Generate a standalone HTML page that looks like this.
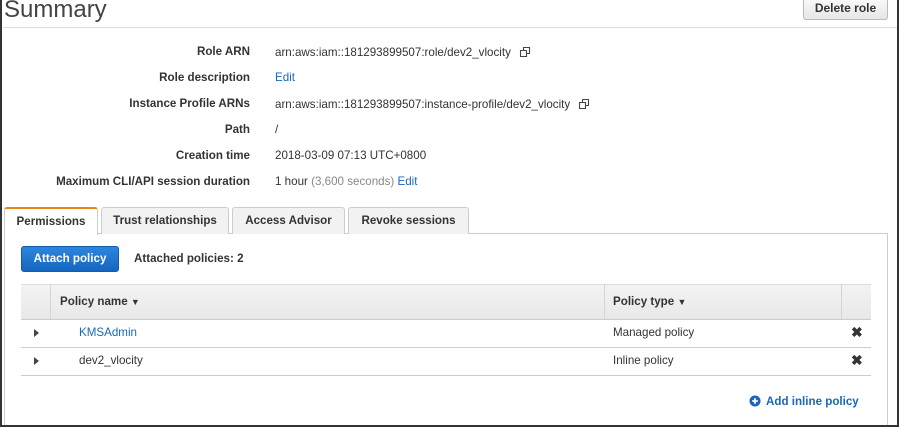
<!DOCTYPE html>
<html><head><style>
*{box-sizing:border-box;margin:0;padding:0}
body{width:899px;height:427px;overflow:hidden;background:#fff;font-family:"Liberation Sans",Arial,sans-serif;font-size:11.6px;color:#333;position:relative}
.frame{position:absolute;left:0;top:0;width:899px;height:427px;border:2px solid #333;border-top:0;z-index:5}
.abs{position:absolute;white-space:nowrap}
.title{left:4px;top:-4px;font-size:24px;color:#444}
.hr{left:3px;top:27px;width:894px;height:1px;background:#ddd}
.del{left:803px;top:-2px;width:85px;height:22px;border:1px solid #bbb;border-top:0;border-radius:0 0 3px 3px;background:linear-gradient(#fafafa,#e6e6e6);font-weight:bold;text-align:center;line-height:20px;color:#333;font-size:12px}
.lbl{right:649px;font-weight:bold;text-align:right}
.val{left:275px}
.blue{color:#1a66b8}
.gray{color:#888}
.tab{top:207px;height:27px;border:1px solid #ccc;border-bottom:0;background:#f2f2f2;font-weight:bold;text-align:center;line-height:25px;border-radius:3px 3px 0 0}
.panel{left:4px;top:233px;width:884px;height:192px;border:1px solid #ccc;border-bottom:0}
.btn{left:21px;top:246px;width:98px;height:26px;border-radius:3px;background:linear-gradient(#2d86de,#1566c0);border:1px solid #135bab;color:#fff;font-weight:bold;text-align:center;line-height:24px}
.hd{left:21px;top:284px;width:850px;height:36px;background:linear-gradient(#f3f3f3,#e8e8e8);border-top:1px solid #ddd}
.vd{top:284px;width:1px;height:36px;background:#d4d4d4}
.rl{left:21px;width:850px;height:1px;background:#ccc}
.tri{width:0;height:0;border-left:5px solid #444;border-top:4px solid transparent;border-bottom:4px solid transparent}
.x{font-weight:bold;font-size:14px;color:#333}
</style></head><body>
<div class="abs title">Summary</div>
<div class="abs hr"></div>
<div class="abs del">Delete role</div>

<div class="abs lbl" style="top:45px">Role ARN</div>
<div class="abs val" style="top:45px">arn:aws:iam::181293899507:role/dev2_vlocity <svg width="14" height="14" viewBox="0 0 14 14" style="vertical-align:-3px;margin-left:4px"><path d="M2.5 5.5h6v6h-6z M5.5 5.5V2.5h6v6h-3" fill="none" stroke="#444" stroke-width="1.1"/></svg></div>
<div class="abs lbl" style="top:71px">Role description</div>
<div class="abs val blue" style="top:71px">Edit</div>
<div class="abs lbl" style="top:97px">Instance Profile ARNs</div>
<div class="abs val" style="top:97px">arn:aws:iam::181293899507:instance-profile/dev2_vlocity <svg width="14" height="14" viewBox="0 0 14 14" style="vertical-align:-3px;margin-left:4px"><path d="M2.5 5.5h6v6h-6z M5.5 5.5V2.5h6v6h-3" fill="none" stroke="#444" stroke-width="1.1"/></svg></div>
<div class="abs lbl" style="top:123px">Path</div>
<div class="abs val" style="top:123px">/</div>
<div class="abs lbl" style="top:149px">Creation time</div>
<div class="abs val" style="top:149px">2018-03-09 07:13 UTC+0800</div>
<div class="abs lbl" style="top:175px">Maximum CLI/API session duration</div>
<div class="abs val" style="top:175px">1 hour <span class="gray">(3,600 seconds)</span> <span class="blue">Edit</span></div>

<div class="abs panel"></div>
<div class="abs tab" style="left:4px;width:94px;background:#fff;border-top:2px solid #e8861a;height:28px;z-index:2">Permissions</div>
<div class="abs tab" style="left:101px;width:128px">Trust relationships</div>
<div class="abs tab" style="left:232px;width:113px">Access Advisor</div>
<div class="abs tab" style="left:348px;width:121px">Revoke sessions</div>

<div class="abs btn">Attach policy</div>
<div class="abs" style="left:134px;top:252px;font-weight:bold">Attached policies: 2</div>

<div class="abs hd"></div>
<div class="abs vd" style="left:50px"></div>
<div class="abs vd" style="left:604px"></div>
<div class="abs vd" style="left:841px"></div>
<div class="abs" style="left:60px;top:295px;font-weight:bold">Policy name <span style="font-size:9px">&#9660;</span></div>
<div class="abs" style="left:613px;top:295px;font-weight:bold">Policy type <span style="font-size:9px">&#9660;</span></div>
<div class="abs rl" style="top:319px"></div>
<div class="abs rl" style="top:347px"></div>
<div class="abs rl" style="top:375px"></div>
<div class="abs tri" style="left:34px;top:329px"></div>
<div class="abs tri" style="left:34px;top:357px"></div>
<div class="abs blue" style="left:79px;top:326px">KMSAdmin</div>
<div class="abs" style="left:79px;top:354px">dev2_vlocity</div>
<div class="abs" style="left:613px;top:326px">Managed policy</div>
<div class="abs" style="left:613px;top:354px">Inline policy</div>
<div class="abs x" style="left:851px;top:324px">&#10006;</div>
<div class="abs x" style="left:851px;top:352px">&#10006;</div>

<div class="abs" style="left:749px;top:395px"><svg width="12" height="12" viewBox="0 0 13 13"><circle cx="6.5" cy="6.5" r="6" fill="#1a66b8"/><path d="M6.5 3.5v6M3.5 6.5h6" stroke="#fff" stroke-width="2"/></svg></div>
<div class="abs blue" style="left:766px;top:395px;font-weight:bold">Add inline policy</div>
<div class="frame"></div>
</body></html>
